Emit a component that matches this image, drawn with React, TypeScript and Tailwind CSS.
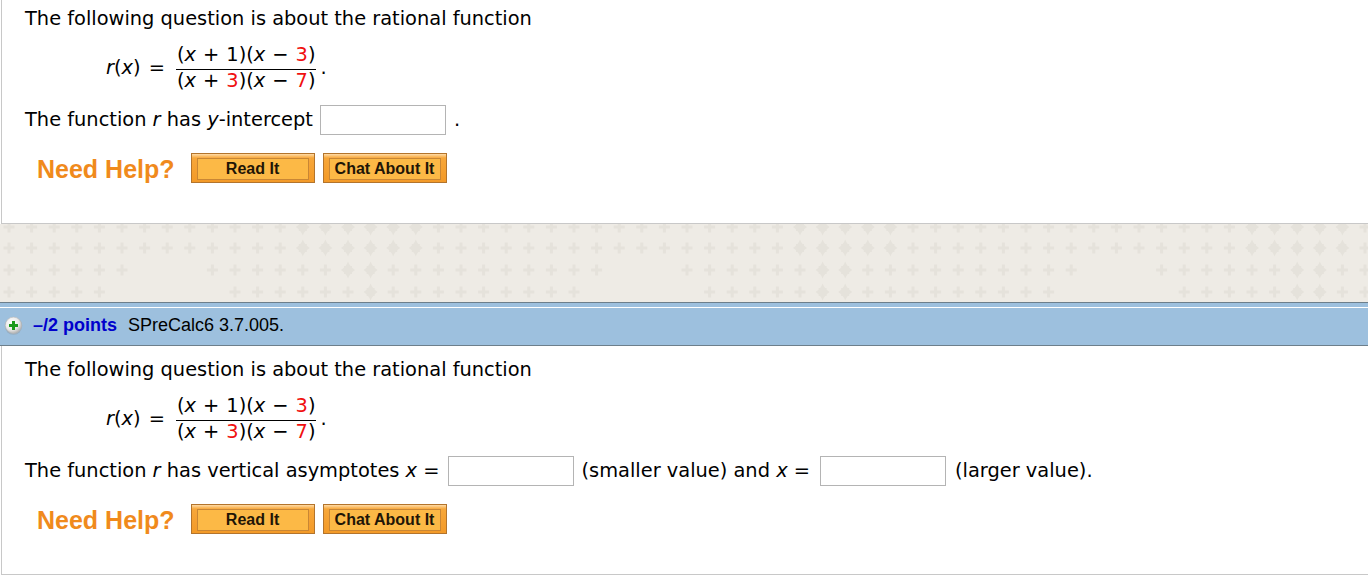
import React from 'react';

const body = "font-['DejaVu_Sans',sans-serif]";
const arial = "font-['Liberation_Sans',Arial,sans-serif]";

// decorative band between the two questions
const ROWS = [3, 24, 46, 68];
const inAny = (x: number, ranges: number[][]) => ranges.some(([a, b]) => x >= a && x <= b);

function shapeAt(row: number, x: number): 'cross' | 'diamond' | null {
  if (row < 2) {
    return inAny(x, [[300, 420], [781, 895], [1250, 1360]]) ? 'diamond' : 'cross';
  }
  if (row === 2) {
    if (inAny(x, [[131, 205], [605, 683], [1080, 1160]])) return null;
    return inAny(x, [[340, 385], [820, 855], [1295, 1330]]) ? 'diamond' : 'cross';
  }
  if (inAny(x, [[111, 228], [585, 706], [1058, 1180]])) return null;
  return inAny(x, [[365, 385], [820, 855], [1295, 1330]]) ? 'diamond' : 'cross';
}

const PatternBand = () => {
  const items: React.ReactNode[] = [];
  ROWS.forEach((cy, r) => {
    for (let c = 0; c < 61; c++) {
      const cx = 9 + c * 22.6;
      const kind = shapeAt(r, cx);
      if (!kind) continue;
      if (kind === 'cross') {
        items.push(
          <path
            key={`${r}-${c}`}
            d={`M${cx - 5.5} ${cy - 1.5}h4v-4h3v4h4v3h-4v4h-3v-4h-4z`}
          />
        );
      } else {
        items.push(
          <path
            key={`${r}-${c}`}
            d={`M${cx} ${cy - 8.5}Q${cx + 2} ${cy - 3} ${cx + 7} ${cy}Q${cx + 2} ${cy + 3} ${cx} ${cy + 8.5}Q${cx - 2} ${cy + 3} ${cx - 7} ${cy}Q${cx - 2} ${cy - 3} ${cx} ${cy - 8.5}z M${cx - 4} ${cy - 4}h8v8h-8z`}
          />
        );
      }
    }
  });
  return (
    <svg className="block w-[1368px] h-[78px] bg-[#eeebe5]" viewBox="0 0 1368 78">
      <g fill="#e5e2db">{items}</g>
    </svg>
  );
};

const PlusIcon = () => (
  <svg width="19" height="19" viewBox="0 0 19 19">
    <defs>
      <radialGradient id="pg" cx="40%" cy="35%" r="70%">
        <stop offset="0%" stopColor="#ffffff" />
        <stop offset="60%" stopColor="#e9e9e9" />
        <stop offset="100%" stopColor="#a9a9a9" />
      </radialGradient>
    </defs>
    <circle cx="9.5" cy="10" r="8.7" fill="#8f9aa3" opacity="0.5" />
    <circle cx="9.5" cy="9.3" r="8.2" fill="url(#pg)" stroke="#b8b8b8" strokeWidth="0.6" />
    <path d="M8 5h3v3h3v3h-3v3H8v-3H5V8h3z" fill="#1c9a1c" />
  </svg>
);

const Red = ({ children }: { children: React.ReactNode }) => (
  <span className="text-[#f01010]">{children}</span>
);

const Op = ({ children }: { children: React.ReactNode }) => (
  <span className="mx-[7px]">{children}</span>
);

const X = () => <i>x</i>;

const Fraction = ({ top, bottom }: { top: React.ReactNode; bottom: React.ReactNode }) => (
  <div className="flex items-center mt-[13px] ml-[81px]">
    <span className="leading-[22px]">
      <i>r</i>(<X />) <span className="ml-[2px]">=</span>
    </span>
    <div className="ml-[11px] flex flex-col items-center">
      <div className="leading-[22px] px-[1px]">{top}</div>
      <div className="mt-[3px] h-px w-full bg-black" />
      <div className="leading-[22px] px-[1px]">{bottom}</div>
    </div>
    <span className="leading-[22px] ml-[4px]">.</span>
  </div>
);

const AnswerBox = () => (
  <input
    type="text"
    className="w-[126px] h-[30px] border border-[#b4b4b4] bg-white outline-none"
  />
);

const HelpButton = ({ label }: { label: string }) => (
  <button className="flex w-[124px] h-[30px] border border-[#b3742c] bg-[linear-gradient(#ffdba6,#f7a73a_4px,#f39a28)] pl-[5px] pr-[5px] pt-[4px] pb-[2px]">
    <span
      className={`flex flex-1 items-center justify-center border border-[#c98634] bg-[#fcb946] text-[16px] font-bold text-[#1f1606] ${arial}`}
    >
      {label}
    </span>
  </button>
);

const NeedHelp = () => (
  <div className="flex items-center mt-[19px] h-[30px]">
    <span className={`ml-[12px] pt-[4px] text-[25px] font-bold text-[#f08a1c] ${arial}`}>
      Need Help?
    </span>
    <div className="ml-[16px] flex gap-[8px]">
      <HelpButton label="Read It" />
      <HelpButton label="Chat About It" />
    </div>
  </div>
);

const QuestionPanel = ({
  className = '',
  children,
}: {
  className?: string;
  children: React.ReactNode;
}) => (
  <div
    className={`ml-px h-[229px] border-l border-b border-[#c8c8c8] bg-white pl-[23px] pt-[12px] text-[19.4px] text-black ${body} ${className}`}
  >
    <div className="leading-[24px] h-[24px]">The following question is about the rational function</div>
    {children}
    <NeedHelp />
  </div>
);

const numerator = (
  <>
    (<X /><Op>+</Op>1)(<X /><Op>−</Op><Red>3</Red>)
  </>
);

const denominator = (
  <>
    (<X /><Op>+</Op><Red>3</Red>)(<X /><Op>−</Op><Red>7</Red>)
  </>
);

export default function App() {
  return (
    <div className="w-[1368px] h-[575px] overflow-hidden bg-white">
      <QuestionPanel className="-mt-[5px]">
        <Fraction top={numerator} bottom={denominator} />
        <div className="flex items-center mt-[13px] h-[29px] leading-[24px]">
          <span>
            The function <i>r</i> has <i>y</i>-intercept
          </span>
          <span className="ml-[7px]">
            <AnswerBox />
          </span>
          <span className="ml-[8px]">.</span>
        </div>
      </QuestionPanel>

      <PatternBand />

      <div className="border-t border-b border-[#6d7f8b] bg-[#9dc0de]">
        <div className="h-[4px]" />
        <div className="h-px bg-white" />
        <div className={`flex items-center h-[37px] pb-[3px] pl-[4px] ${arial}`}>
          <PlusIcon />
          <span className="ml-[10px] text-[18px] font-bold text-[#0000cc]">–/2 points</span>
          <span className="ml-[11px] text-[18px] text-black">SPreCalc6 3.7.005.</span>
        </div>
      </div>

      <QuestionPanel>
        <Fraction top={numerator} bottom={denominator} />
        <div className="flex items-center mt-[13px] h-[29px] leading-[24px]">
          <span>
            The function <i>r</i> has vertical asymptotes <X /> =
          </span>
          <span className="ml-[8px]">
            <AnswerBox />
          </span>
          <span className="ml-[8px]">
            (smaller value) and <X /> =
          </span>
          <span className="ml-[10px]">
            <AnswerBox />
          </span>
          <span className="ml-[9px]">(larger value).</span>
        </div>
      </QuestionPanel>
    </div>
  );
}
